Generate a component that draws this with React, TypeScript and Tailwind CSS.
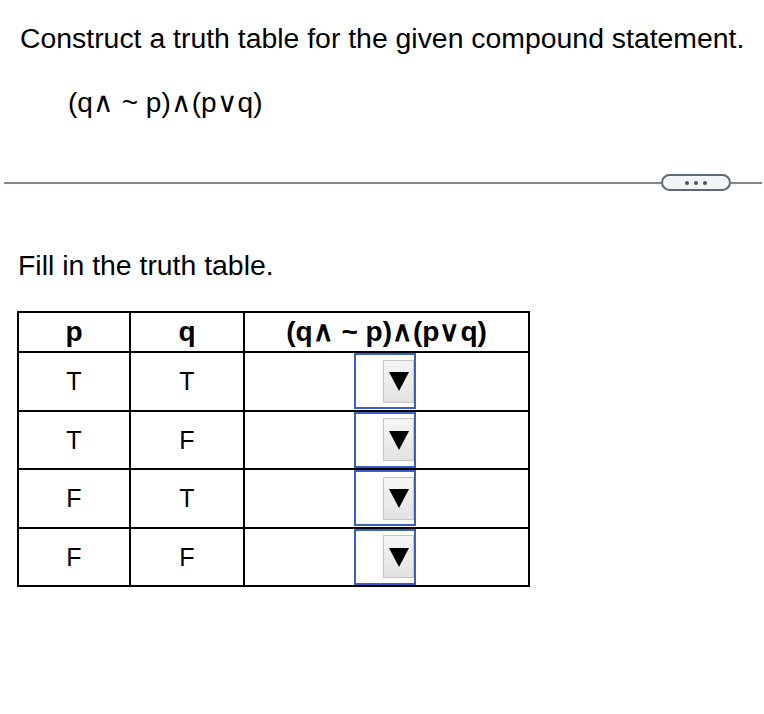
import React from "react";

const rows: [string, string][] = [
  ["T", "T"],
  ["T", "F"],
  ["F", "T"],
  ["F", "F"],
];

function Dropdown() {
  return (
    <div className="ml-[109px] flex h-[56px] w-[62px] items-center justify-end border-2 border-[#3b5fc4] bg-white">
      <div className="flex h-[43px] w-[31px] items-center justify-center border border-[#c4c4c4] bg-gradient-to-b from-[#f6f6f6] to-[#e2e2e2]">
        <svg width="20" height="20" viewBox="0 0 20 20">
          <polygon points="0,1 20,1 10,20" fill="#000" />
        </svg>
      </div>
    </div>
  );
}

export default function App() {
  return (
    <div
      className="relative h-[714px] w-[764px] bg-white text-black"
      style={{ fontFamily: '"Liberation Sans", Arial, sans-serif' }}
    >
      <div className="whitespace-nowrap pl-[20px] pt-[22px] text-[28.4px] leading-[32px]">
        Construct a truth table for the given compound statement.
      </div>
      <div className="whitespace-nowrap pl-[68px] pt-[33px] text-[28px] leading-[32px]">
        (q∧ ~ p)∧(p∨q)
      </div>

      <div className="mt-[55px] flex items-center">
        <div className="ml-[4px] h-[2px] flex-1 bg-[#7f8591]" />
        <div className="flex h-[17px] w-[70px] items-center justify-center gap-[5px] rounded-full border-2 border-[#5f6877] bg-[#f2f4f6]">
          <span className="h-[4px] w-[4px] rounded-full bg-[#4b5563]" />
          <span className="h-[4px] w-[4px] rounded-full bg-[#4b5563]" />
          <span className="h-[4px] w-[4px] rounded-full bg-[#4b5563]" />
        </div>
        <div className="mr-[2px] h-[2px] w-[31px] bg-[#7f8591]" />
      </div>

      <div className="whitespace-nowrap pl-[18px] pt-[58px] text-[28.4px] leading-[32px]">
        Fill in the truth table.
      </div>

      <table className="ml-[17px] mt-[30px] border-collapse border-2 border-black text-[25px]">
        <thead>
          <tr className="h-[40px]">
            <th className="w-[112px] border-2 border-black p-0 text-center text-[28px] font-bold leading-[30px]">p</th>
            <th className="w-[114px] border-2 border-black p-0 text-center text-[28px] font-bold leading-[30px]">q</th>
            <th className="w-[285px] whitespace-nowrap border-2 border-black p-0 text-center text-[28px] font-bold leading-[30px]">(q∧ ~ p)∧(p∨q)</th>
          </tr>
        </thead>
        <tbody>
          {rows.map(([p, q], i) => (
            <tr key={i} className="h-[58.5px]">
              <td className="border-2 border-black p-0 text-center leading-[28px]">{p}</td>
              <td className="border-2 border-black p-0 text-center leading-[28px]">{q}</td>
              <td className="border-2 border-black p-0 align-middle">
                <Dropdown />
              </td>
            </tr>
          ))}
        </tbody>
      </table>
    </div>
  );
}
